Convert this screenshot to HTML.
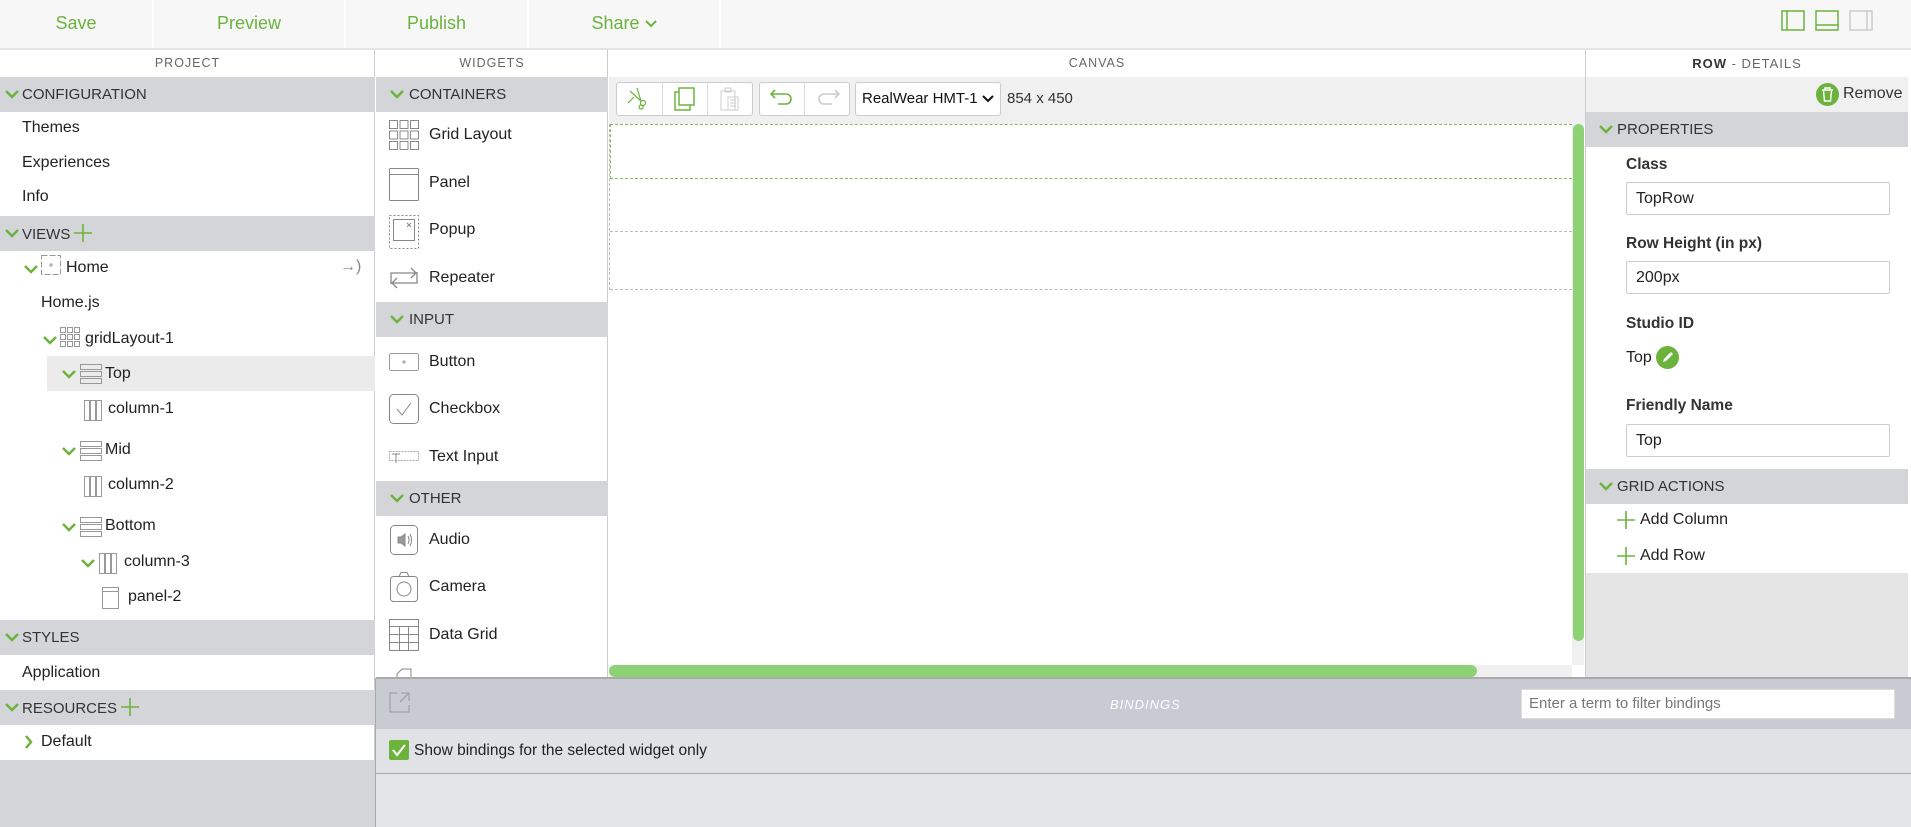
<!DOCTYPE html>
<html><head><meta charset="utf-8">
<style>
*{margin:0;padding:0;box-sizing:border-box}
body{width:1911px;height:827px;overflow:hidden;position:relative;background:#fff;font-family:"Liberation Sans",sans-serif;color:#222;font-size:16px}
div,span,svg{position:absolute}
svg.in{position:relative;vertical-align:-3px;margin-left:4px}
.t{line-height:20px;white-space:nowrap}
.sec{background:#d4d5d9;height:35px}
.sec .t{top:8px;font-size:15px;color:#333}
.hd{font-size:12.5px;letter-spacing:1px;color:#666;line-height:27px;text-align:center}
.g{color:#6cb33e}
.tb{top:0;height:50px;line-height:46px;font-size:18px;color:#6cb33e;text-align:center}
.inp{background:#fff;border:1px solid #ccc;border-radius:2px;height:33px;left:1626px;width:264px}
.inp .t{left:9px;top:6px;font-size:16px}
.lbl{left:1626px;font-weight:bold;font-size:15.5px;color:#333}
</style></head><body>
<!-- top bar -->
<div style="left:0;top:0;width:1911px;height:50px;background:#f7f7f7;border-bottom:2px solid #e4e4e4"></div>
<div class="tb" style="left:0;width:152px">Save</div>
<div style="left:152px;top:0;width:2px;height:48px;background:#fff"></div>
<div class="tb" style="left:154px;width:190px">Preview</div>
<div style="left:344px;top:0;width:2px;height:48px;background:#fff"></div>
<div class="tb" style="left:346px;width:181px">Publish</div>
<div style="left:527px;top:0;width:2px;height:48px;background:#fff"></div>
<div class="tb" style="left:529px;width:190px">Share <svg style="position:relative;top:-1px" width="12" height="9" viewBox="0 0 12 9"><polyline points="1,2 6,7 11,2" fill="none" stroke="#6cb33e" stroke-width="2"/></svg></div>
<div style="left:719px;top:0;width:2px;height:48px;background:#fff"></div>
<svg style="left:1781px;top:10px" width="24" height="21"><rect x="1" y="1" width="22" height="19" fill="none" stroke="#6cb33e" stroke-width="1.5"/><line x1="6" y1="1" x2="6" y2="20" stroke="#6cb33e" stroke-width="1.5"/></svg>
<svg style="left:1815px;top:10px" width="24" height="21"><rect x="1" y="1" width="22" height="19" fill="none" stroke="#6cb33e" stroke-width="1.5"/><line x1="1" y1="15" x2="23" y2="15" stroke="#6cb33e" stroke-width="1.5"/></svg>
<svg style="left:1849px;top:10px" width="24" height="21"><rect x="1" y="1" width="22" height="19" fill="none" stroke="#ccc" stroke-width="1.5"/><line x1="18" y1="1" x2="18" y2="20" stroke="#ccc" stroke-width="1.5"/></svg>

<!-- project panel -->
<div style="left:0;top:50px;width:375px;height:777px;background:#fff;border-right:1px solid #ccc"></div>
<div class="hd" style="left:0;top:50px;width:375px">PROJECT</div>
<div class="sec" style="left:0;top:77px;width:375px"><svg style="left:5px;top:12px" width="14" height="10"><polyline points="1,2 7,8 13,2" fill="none" stroke="#6cb33e" stroke-width="2.5"/></svg><span class="t" style="left:22px">CONFIGURATION</span></div>
<div class="t" style="left:22px;top:118px">Themes</div>
<div class="t" style="left:22px;top:153px">Experiences</div>
<div class="t" style="left:22px;top:187px">Info</div>
<div class="sec" style="left:0;top:216px;width:375px"><svg style="left:5px;top:12px" width="14" height="10"><polyline points="1,2 7,8 13,2" fill="none" stroke="#6cb33e" stroke-width="2.5"/></svg><span class="t" style="left:22px">VIEWS<svg class="in" width="18" height="18"><path d="M9 0V18M0 9H18" stroke="#6cb33e" stroke-width="1.6"/></svg></span></div>
<svg style="left:24px;top:264px" width="14" height="10"><polyline points="1,2 7,8 13,2" fill="none" stroke="#6cb33e" stroke-width="2.5"/></svg>
<svg style="left:41px;top:255px" width="20" height="20"><rect x="0.5" y="0.5" width="19" height="19" fill="none" stroke="#999" stroke-dasharray="6 2"/><path d="M10 8v4M8 10h4" stroke="#999"/></svg>
<div class="t" style="left:66px;top:258px">Home</div>
<div class="t" style="left:340px;top:257px;color:#888;font-size:16px">→)</div>
<div class="t" style="left:41px;top:293px">Home.js</div>
<svg style="left:43px;top:335px" width="14" height="10"><polyline points="1,2 7,8 13,2" fill="none" stroke="#6cb33e" stroke-width="2.5"/></svg>
<svg style="left:60px;top:327px" width="20" height="20" fill="none" stroke="#999"><rect x=".5" y=".5" width="5" height="5"/><rect x="7.5" y=".5" width="5" height="5"/><rect x="14.5" y=".5" width="5" height="5"/><rect x=".5" y="7.5" width="5" height="5"/><rect x="7.5" y="7.5" width="5" height="5"/><rect x="14.5" y="7.5" width="5" height="5"/><rect x=".5" y="14.5" width="5" height="5"/><rect x="7.5" y="14.5" width="5" height="5"/><rect x="14.5" y="14.5" width="5" height="5"/></svg>
<div class="t" style="left:85px;top:329px">gridLayout-1</div>
<div style="left:47px;top:356px;width:328px;height:35px;background:#ebebeb"></div>
<svg style="left:62px;top:369px" width="14" height="10"><polyline points="1,2 7,8 13,2" fill="none" stroke="#6cb33e" stroke-width="2.5"/></svg>
<svg style="left:80px;top:364px" width="22" height="20" fill="none" stroke="#999"><rect x=".5" y=".5" width="21" height="5"/><rect x=".5" y="7.5" width="21" height="5"/><rect x=".5" y="14.5" width="21" height="5"/></svg>
<div class="t" style="left:105px;top:364px">Top</div>
<svg style="left:84px;top:400px" width="18" height="21" fill="none" stroke="#999"><rect x=".5" y=".5" width="5" height="20"/><rect x="6.5" y=".5" width="5" height="20"/><rect x="12.5" y=".5" width="5" height="20"/></svg>
<div class="t" style="left:108px;top:399px">column-1</div>
<svg style="left:62px;top:446px" width="14" height="10"><polyline points="1,2 7,8 13,2" fill="none" stroke="#6cb33e" stroke-width="2.5"/></svg>
<svg style="left:80px;top:441px" width="22" height="20" fill="none" stroke="#999"><rect x=".5" y=".5" width="21" height="5"/><rect x=".5" y="7.5" width="21" height="5"/><rect x=".5" y="14.5" width="21" height="5"/></svg>
<div class="t" style="left:105px;top:440px">Mid</div>
<svg style="left:84px;top:476px" width="18" height="21" fill="none" stroke="#999"><rect x=".5" y=".5" width="5" height="20"/><rect x="6.5" y=".5" width="5" height="20"/><rect x="12.5" y=".5" width="5" height="20"/></svg>
<div class="t" style="left:108px;top:475px">column-2</div>
<svg style="left:62px;top:522px" width="14" height="10"><polyline points="1,2 7,8 13,2" fill="none" stroke="#6cb33e" stroke-width="2.5"/></svg>
<svg style="left:80px;top:517px" width="22" height="20" fill="none" stroke="#999"><rect x=".5" y=".5" width="21" height="5"/><rect x=".5" y="7.5" width="21" height="5"/><rect x=".5" y="14.5" width="21" height="5"/></svg>
<div class="t" style="left:105px;top:516px">Bottom</div>
<svg style="left:81px;top:558px" width="14" height="10"><polyline points="1,2 7,8 13,2" fill="none" stroke="#6cb33e" stroke-width="2.5"/></svg>
<svg style="left:99px;top:553px" width="18" height="21" fill="none" stroke="#999"><rect x=".5" y=".5" width="5" height="20"/><rect x="6.5" y=".5" width="5" height="20"/><rect x="12.5" y=".5" width="5" height="20"/></svg>
<div class="t" style="left:124px;top:552px">column-3</div>
<svg style="left:102px;top:587px" width="17" height="22" fill="none" stroke="#999"><rect x=".5" y=".5" width="16" height="21"/><line x1="0" y1="4.5" x2="17" y2="4.5"/></svg>
<div class="t" style="left:128px;top:587px">panel-2</div>
<div class="sec" style="left:0;top:620px;width:375px"><svg style="left:5px;top:12px" width="14" height="10"><polyline points="1,2 7,8 13,2" fill="none" stroke="#6cb33e" stroke-width="2.5"/></svg><span class="t" style="left:22px">STYLES</span></div>
<div class="t" style="left:22px;top:663px">Application</div>
<div class="sec" style="left:0;top:690px;width:375px"><svg style="left:5px;top:12px" width="14" height="10"><polyline points="1,2 7,8 13,2" fill="none" stroke="#6cb33e" stroke-width="2.5"/></svg><span class="t" style="left:22px">RESOURCES<svg class="in" width="18" height="18"><path d="M9 0V18M0 9H18" stroke="#6cb33e" stroke-width="1.6"/></svg></span></div>
<svg style="left:24px;top:735px" width="9" height="14"><polyline points="2,1 7,7 2,13" fill="none" stroke="#6cb33e" stroke-width="2.5"/></svg>
<div class="t" style="left:41px;top:732px">Default</div>
<div style="left:0;top:760px;width:375px;height:67px;background:#d4d5d9"></div>

<!-- widgets panel -->
<div style="left:376px;top:50px;width:232px;height:628px;background:#fff;border-right:1px solid #ccc"></div>
<div class="hd" style="left:376px;top:50px;width:232px">WIDGETS</div>
<div class="sec" style="left:376px;top:77px;width:232px"><svg style="left:14px;top:12px" width="14" height="10"><polyline points="1,2 7,8 13,2" fill="none" stroke="#6cb33e" stroke-width="2.5"/></svg><span class="t" style="left:33px">CONTAINERS</span></div>
<svg style="left:389px;top:120px" width="30" height="30" fill="none" stroke="#888"><rect x=".5" y=".5" width="8" height="8"/><rect x="11" y=".5" width="8" height="8"/><rect x="21.5" y=".5" width="8" height="8"/><rect x=".5" y="11" width="8" height="8"/><rect x="11" y="11" width="8" height="8"/><rect x="21.5" y="11" width="8" height="8"/><rect x=".5" y="21.5" width="8" height="8"/><rect x="11" y="21.5" width="8" height="8"/><rect x="21.5" y="21.5" width="8" height="8"/></svg>
<div class="t" style="left:429px;top:125px">Grid Layout</div>
<svg style="left:389px;top:168px" width="30" height="33" fill="none" stroke="#888"><rect x=".5" y=".5" width="29" height="32" rx="1"/><line x1="0" y1="6.5" x2="30" y2="6.5"/></svg>
<div class="t" style="left:429px;top:173px">Panel</div>
<svg style="left:389px;top:215px" width="30" height="34" fill="none" stroke="#888"><rect x=".5" y=".5" width="29" height="33" stroke-dasharray="2 2"/><rect x="4.5" y="4.5" width="21" height="21"/><path d="M18 8l4 4M22 8l-4 4"/></svg>
<div class="t" style="left:429px;top:220px">Popup</div>
<svg style="left:389px;top:264px" width="30" height="28" fill="none" stroke="#888" stroke-width="1.3"><path d="M2 20V9h25M22 4l5 5-5 5M28 8v11H3M8 24l-5-5 5-5"/></svg>
<div class="t" style="left:429px;top:268px">Repeater</div>
<div class="sec" style="left:376px;top:302px;width:232px"><svg style="left:14px;top:12px" width="14" height="10"><polyline points="1,2 7,8 13,2" fill="none" stroke="#6cb33e" stroke-width="2.5"/></svg><span class="t" style="left:33px">INPUT</span></div>
<svg style="left:389px;top:353px" width="30" height="18" fill="none" stroke="#999"><rect x=".5" y=".5" width="29" height="17" rx="2"/><path d="M15 7v4M13 9h4"/></svg>
<div class="t" style="left:429px;top:352px">Button</div>
<svg style="left:389px;top:394px" width="30" height="30" fill="none" stroke="#888"><rect x=".5" y=".5" width="29" height="29" rx="4"/><polyline points="8,15 13,21 22,9"/></svg>
<div class="t" style="left:429px;top:399px">Checkbox</div>
<svg style="left:389px;top:451px" width="30" height="12" fill="none" stroke="#aaa"><rect x=".5" y=".5" width="29" height="9" stroke-dasharray="2 1"/><path d="M3 3h8M7 3v9" stroke="#888"/></svg>
<div class="t" style="left:429px;top:447px">Text Input</div>
<div class="sec" style="left:376px;top:481px;width:232px"><svg style="left:14px;top:12px" width="14" height="10"><polyline points="1,2 7,8 13,2" fill="none" stroke="#6cb33e" stroke-width="2.5"/></svg><span class="t" style="left:33px">OTHER</span></div>
<svg style="left:390px;top:525px" width="28" height="30" fill="none" stroke="#888"><rect x=".5" y=".5" width="27" height="29" rx="4"/><path d="M8 12h3l4-3v12l-4-3H8z" fill="#999"/><path d="M18 11q2 4 0 8M20 9q3 6 0 12"/></svg>
<div class="t" style="left:429px;top:530px">Audio</div>
<svg style="left:390px;top:572px" width="28" height="30" fill="none" stroke="#888"><rect x=".5" y="4.5" width="27" height="25" rx="3"/><path d="M9 4.5l2-4h6l2 4"/><circle cx="14" cy="17" r="7"/></svg>
<div class="t" style="left:429px;top:577px">Camera</div>
<svg style="left:389px;top:619px" width="30" height="32" fill="none" stroke="#888"><rect x=".5" y=".5" width="29" height="31"/><path d="M0 7.5h30M0 15.5h30M0 23.5h30M10.5 7v25M19.5 7v25"/></svg>
<div class="t" style="left:429px;top:625px">Data Grid</div>
<svg style="left:396px;top:668px" width="20" height="10" fill="none" stroke="#888"><path d="M1 10V6l5-5h9v9"/></svg>

<!-- canvas -->
<div class="hd" style="left:609px;top:50px;width:976px">CANVAS</div>
<div style="left:609px;top:77px;width:976px;height:47px;background:#f0f0f0"></div>
<div style="left:616px;top:82px;width:137px;height:34px;background:#fff;border:1px solid #ccc;border-radius:3px"></div>
<div style="left:662px;top:83px;width:1px;height:32px;background:#ddd"></div>
<div style="left:707px;top:83px;width:1px;height:32px;background:#ddd"></div>
<svg style="left:627px;top:88px" width="24" height="22" fill="none" stroke="#6cb33e" stroke-width="1.2"><path d="M3 3l11 10M10 0l4 13M7 9l-6 6"/><circle cx="16" cy="15" r="2.5"/><circle cx="14" cy="19" r="2" /></svg>
<svg style="left:674px;top:87px" width="22" height="24" fill="none" stroke="#6cb33e" stroke-width="1.5"><rect x="1" y="5" width="15" height="18"/><rect x="5" y="1" width="15" height="17" fill="#fff"/></svg>
<svg style="left:720px;top:87px" width="20" height="24" fill="none" stroke="#ccc"><rect x="1" y="4" width="14" height="19"/><rect x="5" y="1" width="6" height="4"/><path d="M8 10h10v13H8zM10 13h6M10 16h6M10 19h6"/></svg>
<div style="left:759px;top:82px;width:91px;height:34px;background:#fff;border:1px solid #ccc;border-radius:3px"></div>
<div style="left:804px;top:83px;width:1px;height:32px;background:#ddd"></div>
<svg style="left:770px;top:89px" width="24" height="18" fill="none" stroke="#6cb33e" stroke-width="1.6"><path d="M5 1L1 5l4 4M1 5h15a5 5 0 0 1 0 10H8"/></svg>
<svg style="left:816px;top:89px" width="24" height="18" fill="none" stroke="#ccc" stroke-width="1.6"><path d="M19 1l4 4-4 4M23 5H8a5 5 0 0 0 0 10h8"/></svg>
<div style="left:855px;top:82px;width:146px;height:34px;background:#fff;border:1px solid #ccc;border-radius:3px"></div>
<div class="t" style="left:862px;top:89px;font-size:15px;color:#111">RealWear HMT-1</div>
<svg style="left:982px;top:95px" width="12" height="9"><polyline points="1,1 6,6 11,1" fill="none" stroke="#111" stroke-width="2"/></svg>
<div class="t" style="left:1007px;top:89px;font-size:15px;color:#333">854 x 450</div>
<div style="left:610px;top:124px;width:962px;height:55px;border:1.5px dashed #7cc24b;border-right:none"></div>
<div style="left:610px;top:231px;width:962px;height:0;border-top:1px dashed #bbb"></div>
<div style="left:610px;top:289px;width:962px;height:0;border-top:1px dashed #bbb"></div>
<div style="left:609px;top:124px;width:1px;height:166px;border-left:1px dashed #bbb"></div>
<div style="left:1572px;top:124px;width:12px;height:541px;background:#f0f0f0"></div>
<div style="left:1573px;top:124px;width:11px;height:517px;background:#8dd376;border-radius:6px"></div>
<div style="left:609px;top:665px;width:963px;height:13px;background:#f0f0f0"></div>
<div style="left:609px;top:665px;width:868px;height:12px;background:#8dd376;border-radius:6px"></div>
<div style="left:1585px;top:50px;width:1px;height:628px;background:#ccc"></div>

<!-- right details -->
<div style="left:1586px;top:50px;width:322px;height:628px;background:#e4e4e4"></div>
<div style="left:1586px;top:50px;width:322px;height:27px;background:#fff"></div>
<div class="t" style="left:1586px;top:54px;width:322px;text-align:center;font-size:13px;letter-spacing:1px;color:#666"><b style="color:#333">ROW</b> - DETAILS</div>
<div style="left:1586px;top:77px;width:322px;height:35px;background:#f0f0f0"></div>
<svg style="left:1816px;top:83px" width="23" height="23"><circle cx="11.5" cy="11.5" r="11.5" fill="#6cb33e"/><path d="M6 7h11M9 7V5h5v2M7.5 8l1 10h6l1-10" fill="none" stroke="#fff" stroke-width="1.4"/></svg>
<div class="t" style="left:1843px;top:84px;font-size:16px;color:#333">Remove</div>
<div class="sec" style="left:1586px;top:112px;width:322px"><svg style="left:13px;top:12px" width="14" height="10"><polyline points="1,2 7,8 13,2" fill="none" stroke="#6cb33e" stroke-width="2.5"/></svg><span class="t" style="left:31px">PROPERTIES</span></div>
<div style="left:1586px;top:147px;width:322px;height:322px;background:#fff"></div>
<div class="t lbl" style="top:155px">Class</div>
<div class="inp" style="top:182px"><span class="t">TopRow</span></div>
<div class="t lbl" style="top:234px">Row Height (in px)</div>
<div class="inp" style="top:261px"><span class="t">200px</span></div>
<div class="t lbl" style="top:314px">Studio ID</div>
<div class="t" style="left:1626px;top:348px">Top</div>
<svg style="left:1656px;top:346px" width="23" height="23"><circle cx="11.5" cy="11.5" r="11.5" fill="#6cb33e"/><path d="M7 16l1-3 7-7 2 2-7 7z" fill="#fff"/></svg>
<div class="t lbl" style="top:396px">Friendly Name</div>
<div class="inp" style="top:424px"><span class="t">Top</span></div>
<div class="sec" style="left:1586px;top:469px;width:322px"><svg style="left:13px;top:12px" width="14" height="10"><polyline points="1,2 7,8 13,2" fill="none" stroke="#6cb33e" stroke-width="2.5"/></svg><span class="t" style="left:31px">GRID ACTIONS</span></div>
<div style="left:1586px;top:504px;width:322px;height:69px;background:#fff"></div>
<svg style="left:1617px;top:511px" width="18" height="18"><path d="M9 0V18M0 9H18" stroke="#6cb33e" stroke-width="1.6"/></svg>
<div class="t" style="left:1640px;top:510px">Add Column</div>
<svg style="left:1617px;top:547px" width="18" height="18"><path d="M9 0V18M0 9H18" stroke="#6cb33e" stroke-width="1.6"/></svg>
<div class="t" style="left:1640px;top:546px">Add Row</div>
<div style="left:1908px;top:50px;width:3px;height:628px;background:#fff"></div>

<!-- bindings -->
<div style="left:376px;top:677px;width:1535px;height:2px;background:#aaa"></div>
<div style="left:376px;top:679px;width:1535px;height:50px;background:#c8cbd2"></div>
<svg style="left:389px;top:692px" width="21" height="21" fill="none" stroke="#999"><path d="M8 1H1v19h19v-7M12 1h8v8M20 1l-9 9"/></svg>
<div class="t" style="left:1110px;top:695px;font-size:13px;font-style:italic;color:#fff;letter-spacing:1px">BINDINGS</div>
<div style="left:1521px;top:689px;width:374px;height:30px;background:#fff;border:1px solid #ddd"></div>
<div class="t" style="left:1529px;top:694px;font-size:15px;color:#777">Enter a term to filter bindings</div>
<div style="left:376px;top:729px;width:1535px;height:45px;background:#e1e2e6"></div>
<div style="left:389px;top:740px;width:20px;height:20px;background:#6cb33e;border-radius:2px"></div>
<svg style="left:391px;top:743px" width="16" height="14"><polyline points="2,7 6,12 14,2" fill="none" stroke="#fff" stroke-width="2"/></svg>
<div class="t" style="left:414px;top:741px;font-size:15.5px">Show bindings for the selected widget only</div>
<div style="left:376px;top:773px;width:1535px;height:1px;background:#aaa"></div>
<div style="left:376px;top:774px;width:1535px;height:53px;background:#e3e4e8"></div>
<div style="left:375px;top:678px;width:1px;height:149px;background:#aaa"></div>
</body></html>
